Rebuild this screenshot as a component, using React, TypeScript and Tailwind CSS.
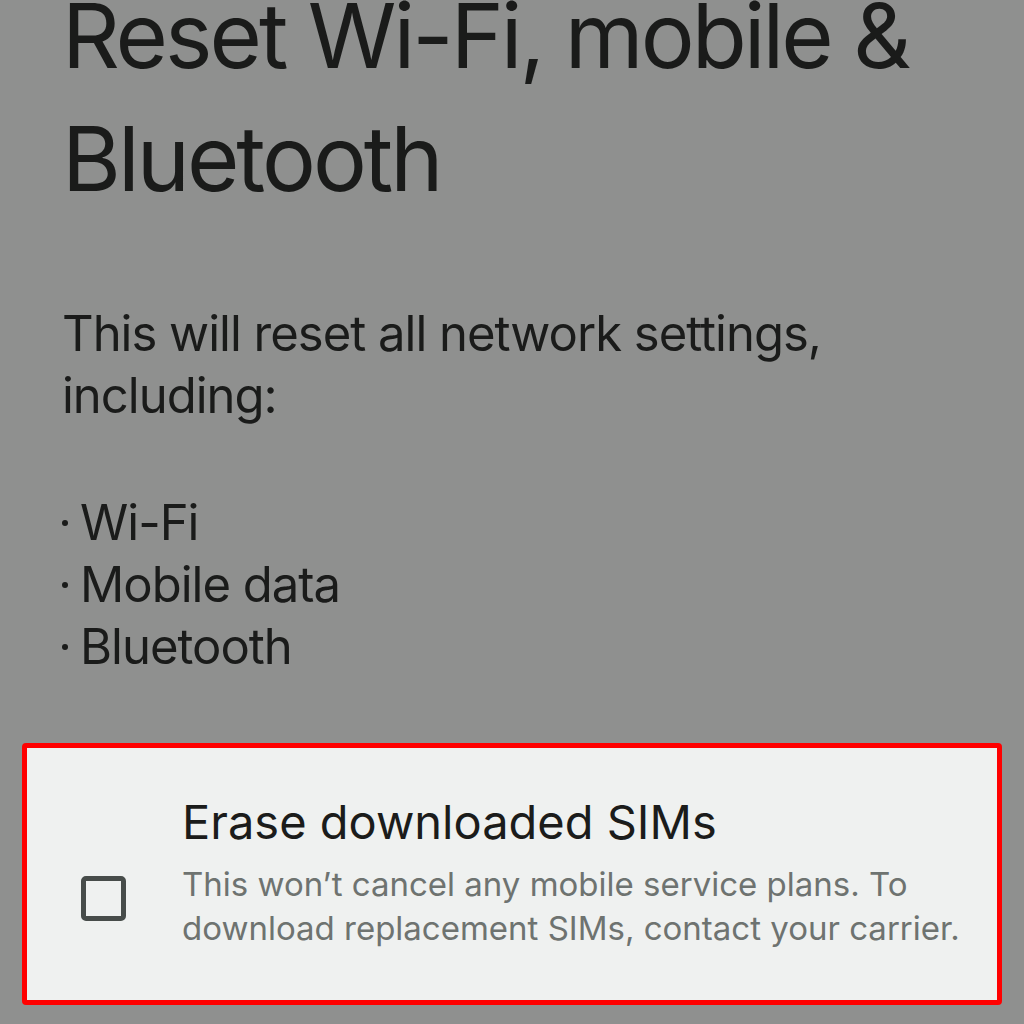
import React from 'react';

const items = ['Wi-Fi', 'Mobile data', 'Bluetooth'];

export default function App() {
  return (
    <div
      className="w-[1024px] h-[1024px] overflow-hidden bg-[#8f908f] text-[#1a1b1a]"
      style={{ fontFamily: 'Inter, "Noto Sans", sans-serif' }}
    >
      <h1 className="-mt-[26px] pl-[62px] text-[90px] leading-[123px] font-normal tracking-[-3px]">
        Reset Wi-Fi, mobile &amp;
        <br />
        Bluetooth
      </h1>

      <div className="mt-[83px] pl-[62px] text-[49px] leading-[62px] tracking-[-1px]">
        <p>This will reset all network settings,</p>
        <p>including:</p>
        <ul className="mt-[65px]">
          {items.map(item => (
            <li key={item} className="flex items-center">
              <span className="w-[6px] h-[6px] rounded-full bg-[#1a1b1a] mr-[12px]" />
              <span>{item}</span>
            </li>
          ))}
        </ul>
      </div>

      {/* Highlighted option */}
      <div className="mx-[22px] mt-[65px] h-[262px] rounded-[4px] border-[5px] border-[#ff0000] bg-[#eff1f0] flex items-start pt-[44px] pl-[54px]">
        <div className="mt-[84px] w-[45px] h-[45px] rounded-[5px] border-[5px] border-[#474c4a] shrink-0" />
        <div className="ml-[56px]">
          <div className="text-[47px] leading-[60px] text-[#1b1c1b]">Erase downloaded SIMs</div>
          <div className="mt-[10px] text-[33px] leading-[44px] text-[#6e7370]">
            This won’t cancel any mobile service plans. To
            <br />
            download replacement SIMs, contact your carrier.
          </div>
        </div>
      </div>
    </div>
  );
}
